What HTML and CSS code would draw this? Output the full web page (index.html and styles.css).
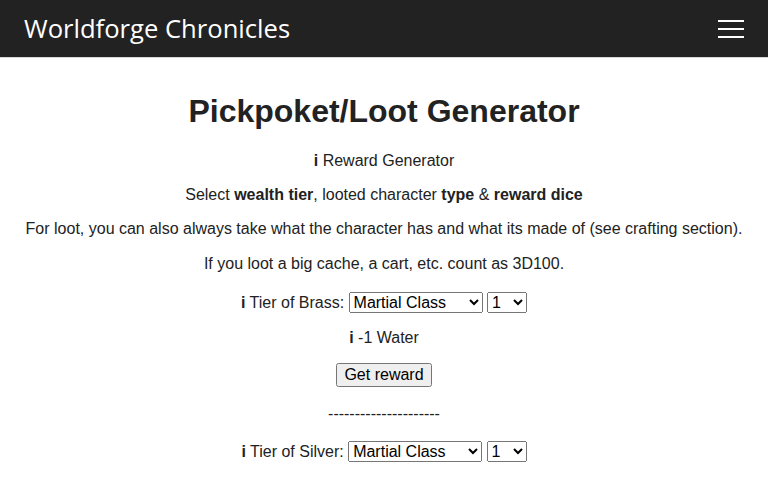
FILE: index.html
```html
<!DOCTYPE html>
<html>
<head>
<meta charset="utf-8">
<link rel="stylesheet" href="styles.css">
</head>
<body>
<nav class="navbar">
  <span class="brand">Worldforge Chronicles</span>
  <button class="burger" aria-label="menu"><span></span><span></span><span></span></button>
</nav>
<main class="content">
  <h1 class="title">Pickpoket/Loot Generator</h1>
  <p><b>i</b> Reward Generator</p>
  <p>Select <b>wealth tier</b>, looted character <b>type</b> &amp; <b>reward dice</b></p>
  <p>For loot, you can also always take what the character has and what its made of (see crafting section).</p>
  <p class="gap1">If you loot a big cache, a cart, etc. count as 3D100.</p>
  <p class="gap3"><b>i</b> Tier of Brass: <select class="sel-class"><option>Martial Class</option></select> <select class="sel-num"><option>1</option></select></p>
  <p><b>i</b> -1 Water</p>
  <p><button class="btn">Get reward</button></p>
  <p class="gap2">---------------------</p>
  <p class="gap2"><b>i</b> Tier of Silver: <select class="sel-class"><option>Martial Class</option></select> <select class="sel-num"><option>1</option></select></p>
</main>
</body>
</html>
```
FILE: styles.css
```css
html, body {
  margin: 0;
  padding: 0;
  background: #fff;
}
body {
  font-family: "Liberation Sans", Arial, sans-serif;
  font-size: 16px;
  color: #222;
}
.navbar {
  height: 57px;
  background: #222;
  border-bottom: 1px solid #d8d8d8;
  display: flex;
  align-items: center;
  justify-content: space-between;
  padding: 0 24px;
  box-sizing: content-box;
}
.brand {
  font-family: "Open Sans", sans-serif;
  font-size: 25.6px;
  color: #fff;
  margin-top: -1px;
}
.burger {
  background: none;
  border: 0;
  padding: 0;
  width: 26px;
  height: 18px;
  display: flex;
  flex-direction: column;
  justify-content: space-between;
  margin-top: 1px;
}
.burger span {
  display: block;
  height: 2px;
  width: 26px;
  background: #fff;
}
.content {
  padding: 14px 8px 0;
  text-align: center;
}
.title {
  font-size: 32px;
  font-weight: bold;
  margin: 21px 0 22px;
  color: #222;
}
p {
  margin: 16px 0;
}
p.gap1 { margin-top: 17px; }
p.gap2 { margin-top: 18px; }
p.gap3 { margin-top: 19px; }
select {
  font-family: "Liberation Sans", Arial, sans-serif;
  font-size: 16px;
  color: #000;
}
.sel-class { width: 134px; }
.sel-num { width: 40px; }
.btn {
  font-family: "Liberation Sans", Arial, sans-serif;
  font-size: 16px;
  color: #000;
}
```
